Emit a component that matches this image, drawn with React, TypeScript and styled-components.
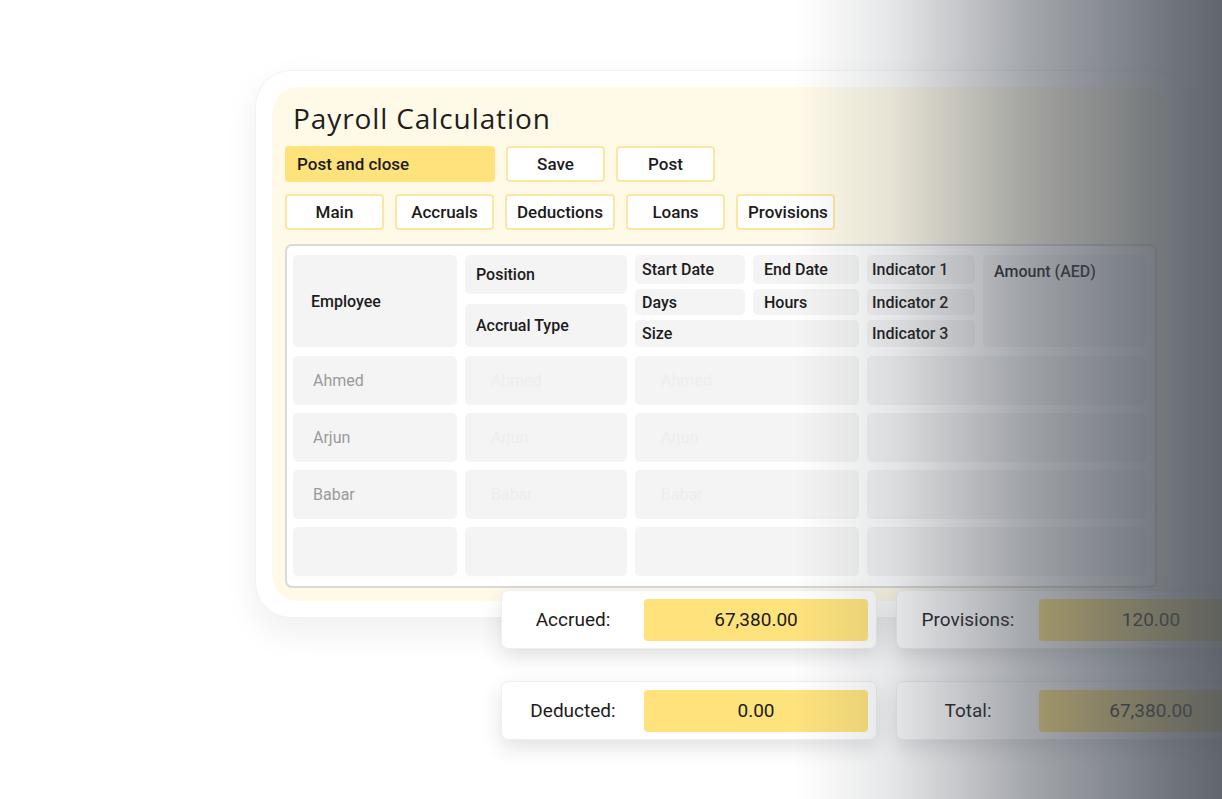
import React from 'react'
import styled, { createGlobalStyle } from 'styled-components'

const GlobalStyle = createGlobalStyle`
    html, body {
        margin: 0;
        padding: 0;
        background: #ffffff;
    }
    body {
        font-family: Roboto, "Noto Sans", Arial, sans-serif;
        color: #1d1d1d;
    }
`

const Stage = styled.div`
    position: relative;
    width: 1222px;
    height: 799px;
    overflow: hidden;
    box-sizing: border-box;
    padding: 70px 0 0 255px;
    background: #ffffff;
`

const Column = styled.div`
    display: flex;
    flex-direction: column;
    align-items: flex-start;
`

const OuterCard = styled.section`
    width: 931px;
    box-sizing: border-box;
    padding: 16px;
    background: #ffffff;
    border: 1px solid #f3f3f3;
    border-radius: 36px;
    box-shadow: 0 14px 34px rgba(30, 34, 44, 0.07);
`

const Panel = styled.div`
    display: flex;
    flex-direction: column;
    box-sizing: border-box;
    padding: 14px 12px 13px 13px;
    background: #fffae8;
    border-radius: 26px;
`

const Title = styled.h1`
    margin: 0 0 11px 8px;
    font-family: "Open Sans", Lato, sans-serif;
    font-size: 28px;
    line-height: 34px;
    font-weight: 500;
    letter-spacing: 0.9px;
    color: #1e1e1e;
`

const ButtonRow = styled.div<{ $after: number }>`
    display: flex;
    gap: 11px;
    margin-bottom: ${p => p.$after}px;
`

const Button = styled.button<{ $w: number; $primary?: boolean }>`
    width: ${p => p.$w}px;
    height: 36px;
    box-sizing: border-box;
    padding: 0 10px;
    border-radius: 4px;
    border: 2px solid ${p => (p.$primary ? '#fee27c' : '#fbe6a2')};
    background: ${p => (p.$primary ? '#fee27c' : '#ffffff')};
    font-family: Roboto, sans-serif;
    font-size: 17px;
    font-weight: 500;
    color: #1b1b1b;
    text-align: ${p => (p.$primary ? 'left' : 'center')};
    cursor: pointer;
`

const TableFrame = styled.div`
    width: 872px;
    box-sizing: border-box;
    padding: 9px 9px 10px 6px;
    border: 2px solid #d9d9d9;
    border-radius: 7px;
    background: #ffffff;
    display: flex;
    flex-direction: column;
    gap: 8px;
`

const HeaderGrid = styled.div`
    display: grid;
    grid-template-columns: 164px 162px 340px 163px;
    gap: 8px;
    height: 92px;
    margin-bottom: 1px;
`

const Stack = styled.div`
    display: flex;
    flex-direction: column;
    gap: 10px;
`

const SubGrid = styled.div`
    display: grid;
    grid-template-columns: 110px 106px 108px;
    grid-template-rows: 29px 26px 27px;
    gap: 5px 8px;
`

const HeadCell = styled.div<{ $pad: number; $top?: boolean; $h?: number; $span?: number }>`
    display: flex;
    align-items: ${p => (p.$top ? 'flex-start' : 'center')};
    box-sizing: border-box;
    padding: ${p => (p.$top ? '7px' : '0')} 6px 0 ${p => p.$pad}px;
    ${p => (p.$h ? `height: ${p.$h}px; flex: none;` : 'flex: 1;')}
    ${p => (p.$span ? `grid-column: span ${p.$span};` : '')}
    background: #f4f4f4;
    border-radius: 5px;
    font-size: 16px;
    font-weight: 500;
    color: #1c1c1c;
    white-space: nowrap;
`

const BodyRow = styled.div`
    display: grid;
    grid-template-columns: 164px 162px 224px 279px;
    gap: 8px;
    height: 49px;
`

const BodyCell = styled.div<{ $faint?: boolean }>`
    display: flex;
    align-items: center;
    padding-left: ${p => (p.$faint ? 26 : 20)}px;
    background: #f4f4f4;
    border-radius: 5px;
    font-size: 16px;
    color: ${p => (p.$faint ? '#eeeeee' : '#9a9a9a')};
`

const SummaryGrid = styled.div`
    position: relative;
    z-index: 1;
    display: grid;
    grid-template-columns: 376px 376px;
    gap: 32px 19px;
    margin: -28px 0 0 246px;
`

const SummaryCard = styled.div`
    display: flex;
    align-items: center;
    height: 59px;
    box-sizing: border-box;
    padding-right: 8px;
    background: #ffffff;
    border: 1px solid #efefef;
    border-radius: 7px;
    box-shadow: 0 8px 20px rgba(30, 34, 44, 0.13);
`

const SummaryLabel = styled.span`
    width: 142px;
    flex: none;
    text-align: center;
    font-size: 19px;
    color: #1b1b1b;
`

const SummaryValue = styled.div`
    flex: 1;
    height: 42px;
    display: flex;
    align-items: center;
    justify-content: center;
    background: #fee27c;
    border-radius: 4px;
    font-size: 19px;
    color: #1b1b1b;
`

const Shade = styled.div`
    position: absolute;
    inset: 0;
    z-index: 5;
    pointer-events: none;
    background: linear-gradient(
        90deg,
        rgba(74, 80, 90, 0) 795px,
        rgba(74, 80, 90, 0.14) 893px,
        rgba(74, 80, 90, 0.32) 960px,
        rgba(74, 80, 90, 0.5) 1027px,
        rgba(74, 80, 90, 0.635) 1093px,
        rgba(74, 80, 90, 0.77) 1160px,
        rgba(74, 80, 90, 0.88) 1222px
    );
`

const employees = ['Ahmed', 'Arjun', 'Babar', '']

const summaries = [
    { label: 'Accrued:', value: '67,380.00' },
    { label: 'Provisions:', value: '120.00' },
    { label: 'Deducted:', value: '0.00' },
    { label: 'Total:', value: '67,380.00' },
]

export default function App() {
    return (
        <Stage>
            <GlobalStyle />
            <Column>
                <OuterCard>
                    <Panel>
                        <Title>Payroll Calculation</Title>
                        <ButtonRow $after={12}>
                            <Button $w={210} $primary>Post and close</Button>
                            <Button $w={99}>Save</Button>
                            <Button $w={99}>Post</Button>
                        </ButtonRow>
                        <ButtonRow $after={14}>
                            <Button $w={99}>Main</Button>
                            <Button $w={99}>Accruals</Button>
                            <Button $w={110}>Deductions</Button>
                            <Button $w={99}>Loans</Button>
                            <Button $w={99}>Provisions</Button>
                        </ButtonRow>
                        <TableFrame>
                            <HeaderGrid>
                                <HeadCell $pad={18}>Employee</HeadCell>
                                <Stack>
                                    <HeadCell $pad={11} $h={39}>Position</HeadCell>
                                    <HeadCell $pad={11}>Accrual Type</HeadCell>
                                </Stack>
                                <SubGrid>
                                    <HeadCell $pad={7}>Start Date</HeadCell>
                                    <HeadCell $pad={11}>End Date</HeadCell>
                                    <HeadCell $pad={5}>Indicator 1</HeadCell>
                                    <HeadCell $pad={7}>Days</HeadCell>
                                    <HeadCell $pad={11}>Hours</HeadCell>
                                    <HeadCell $pad={5}>Indicator 2</HeadCell>
                                    <HeadCell $pad={7} $span={2}>Size</HeadCell>
                                    <HeadCell $pad={5}>Indicator 3</HeadCell>
                                </SubGrid>
                                <HeadCell $pad={11} $top>Amount (AED)</HeadCell>
                            </HeaderGrid>
                            {employees.map((name, i) => (
                                <BodyRow key={i}>
                                    <BodyCell>{name}</BodyCell>
                                    <BodyCell $faint>{name}</BodyCell>
                                    <BodyCell $faint>{name}</BodyCell>
                                    <BodyCell $faint />
                                </BodyRow>
                            ))}
                        </TableFrame>
                    </Panel>
                </OuterCard>
                <SummaryGrid>
                    {summaries.map(s => (
                        <SummaryCard key={s.label}>
                            <SummaryLabel>{s.label}</SummaryLabel>
                            <SummaryValue>{s.value}</SummaryValue>
                        </SummaryCard>
                    ))}
                </SummaryGrid>
            </Column>
            <Shade />
        </Stage>
    )
}
